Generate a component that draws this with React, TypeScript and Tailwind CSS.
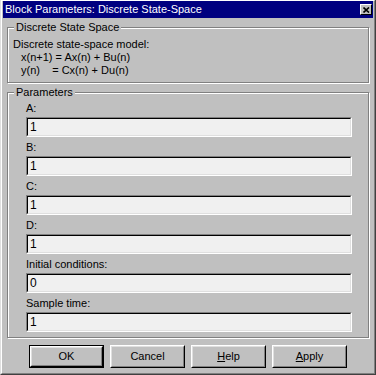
import React from "react"

const fields = [
  { label: "A:", value: "1" },
  { label: "B:", value: "1" },
  { label: "C:", value: "1" },
  { label: "D:", value: "1" },
  { label: "Initial conditions:", value: "0" },
  { label: "Sample time:", value: "1" },
]

function GroupBox({ title, className, children }: { title: string; className?: string; children: React.ReactNode }) {
  return (
    <div
      className={
        "relative mx-[4px] border border-[#808080] shadow-[inset_1px_1px_0_#ffffff,1px_1px_0_#ffffff] " + (className ?? "")
      }
    >
      <span className="absolute left-[6px] -top-[7px] bg-[#c0c0c0] px-[2px] leading-[13px]">{title}</span>
      {children}
    </div>
  )
}

function Button({ children, isDefault }: { children: React.ReactNode; isDefault?: boolean }) {
  return (
    <div className={"w-[75px] h-[23px] " + (isDefault ? "border border-black" : "")}>
      <div className="h-full border border-t-white border-l-white border-b-black border-r-black">
        <div className="h-full flex items-center justify-center border border-t-[#dfdfdf] border-l-[#dfdfdf] border-b-[#808080] border-r-[#808080]">
          {children}
        </div>
      </div>
    </div>
  )
}

export default function App() {
  return (
    <div
      className="w-[376px] h-[375px] bg-[#c0c0c0] text-black text-[11px] border border-t-0 border-l-[#dfdfdf] border-b-[#404040] border-r-[#404040]"
      style={{ fontFamily: '"Liberation Sans", Arial, sans-serif' }}
    >
      <div className="h-full flex flex-col border border-t-white border-l-white border-b-[#808080] border-r-[#808080] px-[1px]">
        {/* Title bar */}
        <div className="h-[17px] shrink-0 bg-[#000080] flex items-center justify-between pl-[2px] pr-[1px]">
          <span className="text-white text-[11px] leading-[13px]">Block Parameters: Discrete State-Space</span>
          <div className="w-[12px] h-[11px] bg-[#c0c0c0] border border-t-white border-l-white border-b-black border-r-black flex items-center justify-center">
            <svg width="7" height="6" viewBox="0 0 7 6">
              <path d="M0.5 0.5 L6 5.5 M6 0.5 L0.5 5.5" stroke="#000" strokeWidth="1.6" />
            </svg>
          </div>
        </div>

        <GroupBox title="Discrete State Space" className="mt-[9px] pt-[10px] pb-[5px] pl-[5px]">
          <div className="leading-[13px]">Discrete state-space model:</div>
          <div className="leading-[13px] pl-[8px] whitespace-pre">x(n+1) = Ax(n) + Bu(n)</div>
          <div className="leading-[13px] pl-[8px] whitespace-pre">y(n)    = Cx(n) + Du(n)</div>
        </GroupBox>

        <GroupBox title="Parameters" className="mt-[9px] pt-[9px] pb-[5px] pl-[18px] pr-[16px]">
          <div className="flex flex-col gap-[4px]">
            {fields.map((f) => (
              <div key={f.label} className="flex flex-col gap-[2px]">
                <div className="leading-[13px] h-[13px]">{f.label}</div>
                <div className="h-[20px] border border-t-[#808080] border-l-[#808080] border-b-white border-r-white">
                  <div className="h-full border border-t-black border-l-black border-b-[#dfdfdf] border-r-[#dfdfdf] bg-[#f0f0f0] flex items-center pl-[2px] text-[12px]">
                    {f.value}
                  </div>
                </div>
              </div>
            ))}
          </div>
        </GroupBox>

        <div className="mt-[7px] flex justify-center gap-[6px]">
          <Button isDefault>OK</Button>
          <Button>Cancel</Button>
          <Button>
            <span>
              <span className="underline">H</span>elp
            </span>
          </Button>
          <Button>
            <span>
              <span className="underline">A</span>pply
            </span>
          </Button>
        </div>
      </div>
    </div>
  )
}
